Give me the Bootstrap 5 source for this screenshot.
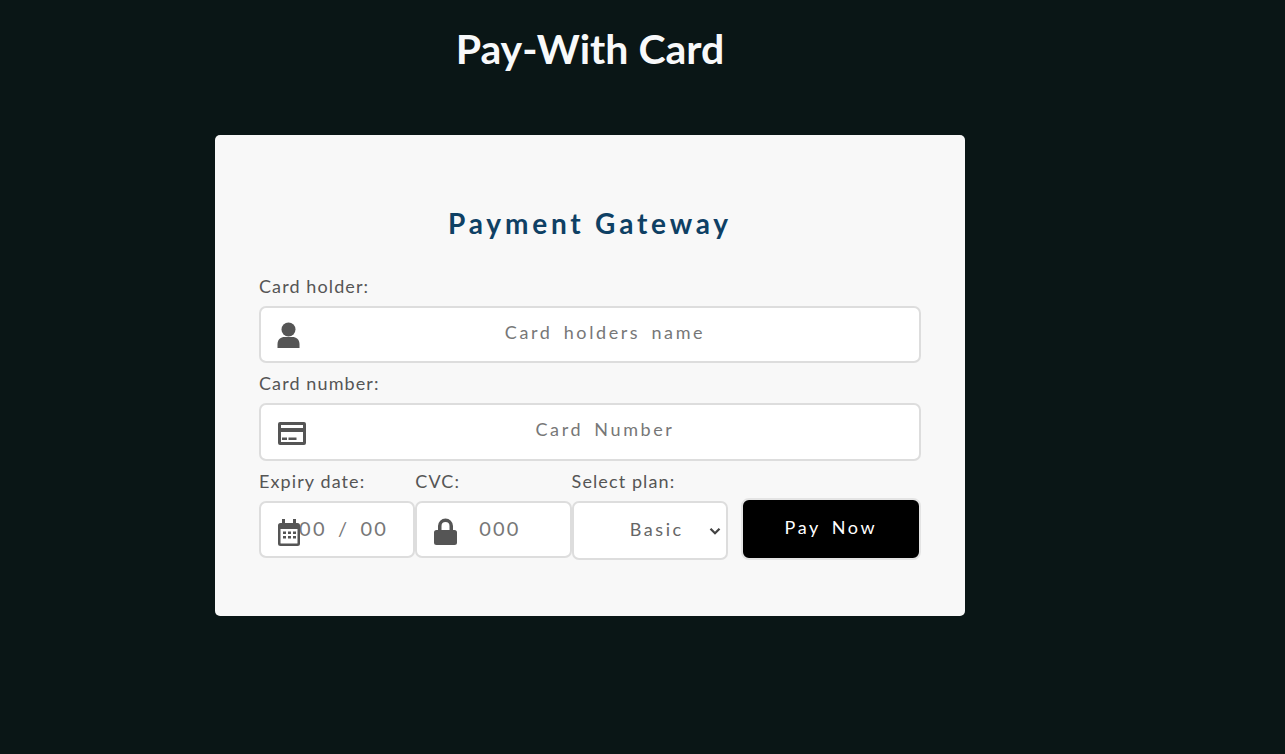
<!DOCTYPE html>
<html lang="en">
<head>
  <meta charset="UTF-8">
  <meta name="viewport" content="width=device-width, initial-scale=1.0">
  <title>Pay-With Card</title>
  <link href="https://cdn.jsdelivr.net/npm/bootstrap@5.3.0/dist/css/bootstrap.min.css" rel="stylesheet">
  <style>
    body {
      background-color: #0a1616;
      font-family: "Lato", "Liberation Sans", sans-serif;
      min-height: 754px;
    }
    .page-title {
      color: #f8f9fa;
      font-size: 41px;
      font-weight: 700;
      line-height: 48px;
      text-align: center;
      margin: 25px 0 62px;
      width: 1180px;
    }
    .pay-card {
      width: 750px;
      height: 481px;
      margin-left: 215px;
      padding: 69px 44px 0;
      background: #f8f8f8;
      border-radius: 5px;
    }
    .pay-heading {
      color: #0e4064;
      font-size: 28px;
      font-weight: 700;
      letter-spacing: 3.8px;
      line-height: 38px;
      text-align: center;
      margin-bottom: 32px;
    }
    .pay-label {
      display: block;
      color: #555;
      font-size: 18px;
      letter-spacing: 1.1px;
      line-height: 24px;
      height: 24px;
      margin-bottom: 8px;
    }
    .field-wrap {
      position: relative;
    }
    .field-gap {
      margin-bottom: 8px;
    }
    .field-wrap svg {
      position: absolute;
      fill: #555;
    }
    .pay-input.form-control,
    .pay-input.form-select {
      height: 57px;
      border: 2px solid #ddd;
      border-radius: 7px;
      color: #666;
      font-size: 18px;
      letter-spacing: 2.6px;
      word-spacing: 4px;
      text-align: center;
      box-shadow: none;
    }
    .pay-input.form-control {
      padding: 0 12px 6px 42px;
    }
    .pay-input.tall-input.form-control {
      height: 58px;
    }
    .pay-input.form-control::placeholder {
      color: #777;
      opacity: 1;
    }
    .pay-input.short-input.form-control {
      font-size: 20px;
      letter-spacing: 2.2px;
      padding: 0 0 3px 13px;
    }
    .pay-input.form-select {
      height: 59px;
      padding: 0 30px 2px 44px;
      background-image: url("data:image/svg+xml,%3csvg xmlns='http://www.w3.org/2000/svg' viewBox='0 0 16 16'%3e%3cpath fill='none' stroke='%23444' stroke-width='3' d='M2 5l6 6 6-6'/%3e%3c/svg%3e");
      background-size: 12px 12px;
      background-position: right 5px center;
    }
    .half-col {
      width: 156.3px;
    }
    .pay-btn.btn {
      width: 180px;
      height: 62px;
      margin-left: 13px;
      margin-top: 29px;
      padding-bottom: 10px;
      background: #000;
      border: 2px solid #e4e4e4;
      border-radius: 8px;
      color: #fff;
      font-size: 18px;
      letter-spacing: 2.6px;
      word-spacing: 4px;
    }
  </style>
</head>
<body>
  <h1 class="page-title">Pay-With Card</h1>

  <div class="pay-card">
    <h2 class="pay-heading">Payment Gateway</h2>
    <form onsubmit="return false">
      <label class="pay-label">Card holder:</label>
      <div class="field-wrap field-gap">
        <svg style="left:18px;top:16px" width="23" height="27" viewBox="0 0 23 27"><circle cx="11.500" cy="7.500" r="7"/><path d="M.5 26v-4c0-4.500 3.500-7 7-7h8c3.500 0 7 2.500 7 7v4z"/></svg>
        <input type="text" class="form-control pay-input" placeholder="Card holders name">
      </div>

      <label class="pay-label">Card number:</label>
      <div class="field-wrap field-gap">
        <svg style="left:19px;top:19px" width="28" height="23" viewBox="0 0 28 23"><path fill-rule="evenodd" d="M2 0h24a2 2 0 0 1 2 2v19a2 2 0 0 1-2 2H2a2 2 0 0 1-2-2V2a2 2 0 0 1 2-2zm1 3v3h22V3zm0 7v10h22V10z"/><rect x="4" y="15.500" width="5" height="2.500"/><rect x="10.500" y="15.500" width="8" height="2.500"/></svg>
        <input type="text" class="form-control pay-input tall-input" placeholder="Card Number">
      </div>

      <div class="d-flex align-items-start">
        <div class="half-col">
          <label class="pay-label">Expiry date:</label>
          <div class="field-wrap">
            <svg style="left:19px;top:18px" width="22" height="27" viewBox="0 0 22 27"><path fill-rule="evenodd" d="M4 0h3v4h8V0h3v4h1.500A2.500 2.500 0 0 1 22 6.500v18a2.500 2.500 0 0 1-2.500 2.500h-17A2.500 2.500 0 0 1 0 24.500v-18A2.500 2.500 0 0 1 2.500 4H4zM2.500 10v14a.5.5 0 0 0 .5.5h16a.5.5 0 0 0 .5-.5V10z"/><path d="M5 12.500h3v2.500H5zm5 0h3v2.500h-3zm5 0h3v2.500h-3zM5 17h3v2.500H5zm5 0h3v2.500h-3zm5 0h3v2.500h-3z"/></svg>
            <input type="text" class="form-control pay-input short-input" placeholder="00 / 00">
          </div>
        </div>
        <div class="half-col">
          <label class="pay-label">CVC:</label>
          <div class="field-wrap">
            <svg style="left:19px;top:17px" width="23" height="27" viewBox="0 0 23 27"><path fill-rule="evenodd" d="M4 12V8a7.500 7.500 0 0 1 15 0v4h1.500a2.500 2.500 0 0 1 2.500 2.500v10a2.500 2.500 0 0 1-2.500 2.500h-18A2.500 2.500 0 0 1 0 24.500v-10A2.500 2.500 0 0 1 2.500 12zm3.500 0h8V8a4 4 0 0 0-8 0z"/></svg>
            <input type="text" class="form-control pay-input short-input" placeholder="000">
          </div>
        </div>
        <div class="half-col">
          <label class="pay-label">Select plan:</label>
          <select class="form-select pay-input">
            <option>Basic</option>
            <option>Premium</option>
          </select>
        </div>
        <button type="submit" class="btn pay-btn">Pay Now</button>
      </div>
    </form>
  </div>

  <script src="https://cdn.jsdelivr.net/npm/bootstrap@5.3.0/dist/js/bootstrap.bundle.min.js"></script>
</body>
</html>
